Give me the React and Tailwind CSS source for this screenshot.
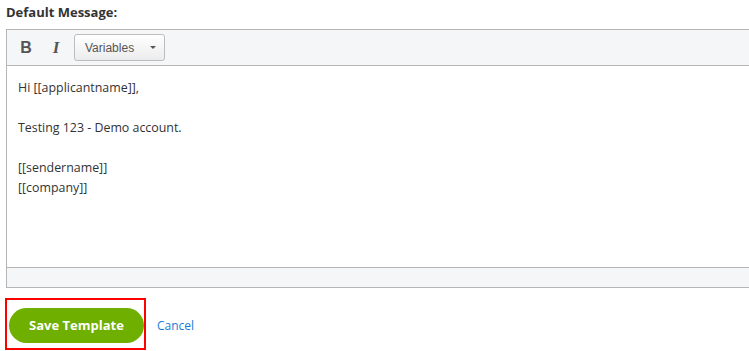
export default function App() {
  return (
    <div className="h-[351px] w-[749px] overflow-hidden bg-white font-['Open_Sans',sans-serif] text-[#333]">
      <div className="pl-[6px] pt-[3px] text-[13px] font-bold leading-[18px] text-[#333]">Default Message:</div>
      <div className="ml-[6px] mt-[8px] w-[760px] border border-[#b5b5b5]">
        <div className="flex h-[36px] items-center border-b border-[#b5b5b5] bg-[#f5f6f8] pl-[12px]">
          <span className="w-[14px] text-center font-['Liberation_Sans',sans-serif] text-[16px] font-bold text-[#555]">B</span>
          <span className="ml-[16px] w-[14px] text-center font-['Liberation_Serif',serif] text-[17px] font-bold italic text-[#555]">I</span>
          <button className="ml-[11px] flex h-[27px] w-[91px] items-center justify-between rounded-[3px] border border-[#bdbdbd] bg-gradient-to-b from-white to-[#ececec] pl-[10px] pr-[8px] font-['Liberation_Sans',sans-serif] text-[12px] text-[#555]">
            <span>Variables</span>
            <span className="h-0 w-0 border-x-[3px] border-t-[3px] border-x-transparent border-t-[#555]"></span>
          </button>
        </div>
        <div className="h-[201px] px-[11px] pt-[12px] text-[12.4px] leading-[20px] text-[#333]">
          <p>Hi [[applicantname]],</p>
          <p>&nbsp;</p>
          <p>Testing 123 - Demo account.</p>
          <p>&nbsp;</p>
          <p>[[sendername]]</p>
          <p>[[company]]</p>
        </div>
        <div className="h-[20px] border-t border-[#b5b5b5] bg-[#f5f6f8]"></div>
      </div>
      <div className="mt-[10px] flex items-center">
        <div className="ml-[5px] border-2 border-[#ff0000] pb-[5px] pl-[2px] pr-0 pt-[8px]">
          <button className="h-[35px] w-[135px] rounded-full bg-[#6eaf00] text-[13px] font-bold text-white">Save Template</button>
        </div>
        <a className="ml-[11px] mt-[3px] text-[12px] text-[#1a7bd6]" href="#">Cancel</a>
      </div>
    </div>
  );
}
